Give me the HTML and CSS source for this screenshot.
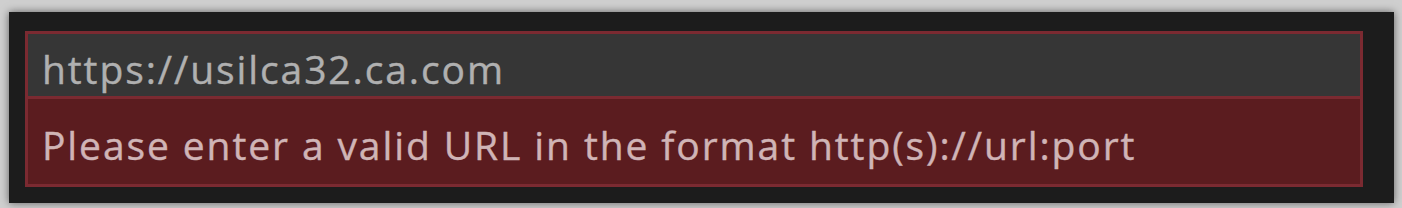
FILE: index.html
```html
<!DOCTYPE html>
<html lang="en">
<head>
    <meta charset="UTF-8">
    <meta name="viewport" content="width=device-width, initial-scale=1.0">
    <title>URL Field</title>
    <link rel="stylesheet" href="styles.css">
</head>
<body>
    <div class="panel">
        <div class="field invalid">
            <input type="text" class="field-input" value="https://usilca32.ca.com">
            <div class="field-error">Please enter a valid URL in the format http(s)://url:port</div>
        </div>
    </div>
</body>
</html>
```

FILE: styles.css
```css
body {
    margin: 0;
    background-color: #cfcfcf;
    font-family: "Open Sans", sans-serif;
}

.panel {
    margin: 12px 8px 5px 9px;
    height: 191px;
    box-sizing: border-box;
    padding: 19px 31px 16px 16px;
    background: #1c1c1c;
    box-shadow: 0 0 8px rgba(0, 0, 0, 0.55);
}

.field {
    border: 3px solid #7b2a31;
    background: #5b1c1f;
}

.field-input {
    display: block;
    width: 100%;
    box-sizing: border-box;
    height: 65px;
    margin: 0;
    padding: 6px 14px 0;
    border: none;
    border-bottom: 3px solid #7b2a31;
    background: #363636;
    color: #b0b0b0;
    font-family: "Open Sans", sans-serif;
    font-size: 39px;
    letter-spacing: 1.9px;
    -webkit-text-stroke: 0.4px #b0b0b0;
    outline: none;
}

.field-error {
    height: 85px;
    box-sizing: border-box;
    padding: 6px 14px 0;
    line-height: 79px;
    color: #d0b4b6;
    font-size: 39px;
    letter-spacing: 1.9px;
    -webkit-text-stroke: 0.4px #d0b4b6;
}
```
